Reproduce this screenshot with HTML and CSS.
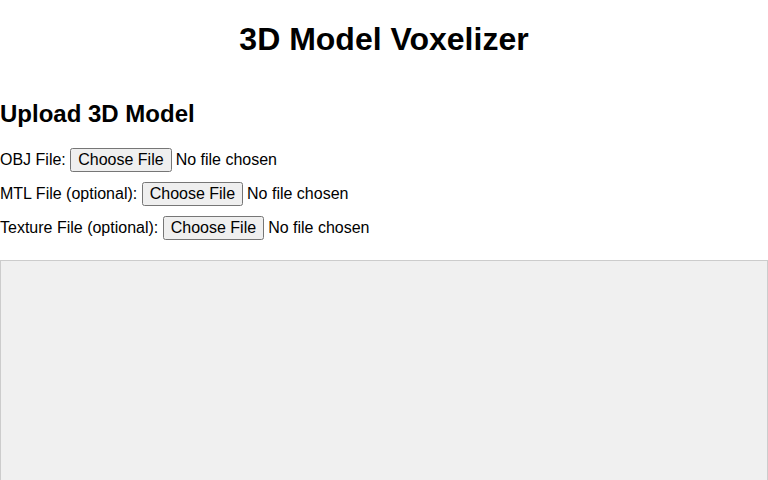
FILE: index.html
```html
<!DOCTYPE html>
<html>
<head>
<meta charset="utf-8">
<link rel="stylesheet" href="styles.css">
</head>
<body>
<header class="header"><h1 class="title">3D Model Voxelizer</h1></header>
<section class="upload">
  <h2 class="subtitle">Upload 3D Model</h2>
  <div class="row"><label>OBJ File:</label> <input type="file" accept=".obj"></div>
  <div class="row"><label>MTL File (optional):</label> <input type="file" accept=".mtl"></div>
  <div class="row"><label>Texture File (optional):</label> <input type="file" accept="image/*"></div>
</section>
<div class="viewer"></div>
</body>
</html>
```
FILE: styles.css
```css
html, body { margin: 0; padding: 0; }
body { font-family: "Liberation Sans", Arial, sans-serif; font-size: 16px; color: #000; background: #fff; overflow: hidden; }
.header { padding: 0; }
.title { text-align: center; font-size: 32px; margin: 21px 0 42px; }
.subtitle { font-size: 24px; margin: 0 0 20px; }
.row { margin-bottom: 10px; }
.row input { font-family: "Liberation Sans", Arial, sans-serif; font-size: 16px; }
.viewer { margin-top: 20px; height: 400px; background: #f0f0f0; border: 1px solid #ccc; }
```
